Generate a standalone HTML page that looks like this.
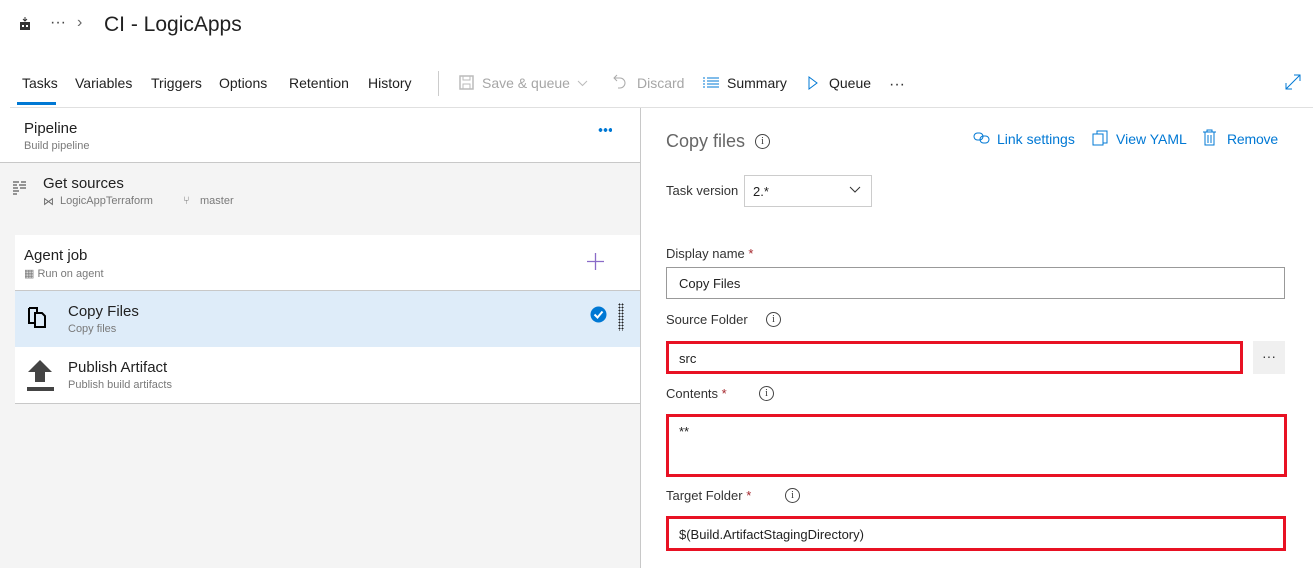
<!DOCTYPE html>
<html><head><meta charset="utf-8"><style>
*{box-sizing:border-box;margin:0;padding:0}
body{width:1313px;height:568px;overflow:hidden;background:#fff;font-family:"Liberation Sans",sans-serif;color:#212121;position:relative}
.a{position:absolute;white-space:nowrap}
.s{font-size:11px;color:#797979}
.lbl{font-size:13px;color:#333}
.req{color:#a4262c}
.info{display:inline-block;width:15px;height:15px;border:1px solid #444;border-radius:50%;font-size:10px;line-height:13px;text-align:center;font-family:"Liberation Serif",serif;color:#333}
.red{position:absolute;border:3px solid #e81123;background:#fff}
</style></head><body>
<!-- header -->
<svg class="a" style="left:19px;top:17px" width="12" height="14" viewBox="0 0 12 14"><path d="M6 0v4M4 2l2 2 2-2" stroke="#333" fill="none"/><rect x="1" y="5" width="10" height="8" fill="#333"/><rect x="3" y="8" width="2" height="2" fill="#fff"/><rect x="7" y="8" width="2" height="2" fill="#fff"/></svg>
<div class="a" style="left:50px;top:14px;font-size:16px;color:#444">···</div>
<div class="a" style="left:77px;top:14px;font-size:16px;color:#666">›</div>
<div class="a" style="left:104px;top:13px;font-size:21px;color:#212121">CI - LogicApps</div>
<!-- tabs -->
<div class="a" style="left:22px;top:75px;font-size:14px;color:#212121">Tasks</div>
<div class="a" style="left:17px;top:102px;width:39px;height:3px;background:#0078d4"></div>
<div class="a" style="left:75px;top:75px;font-size:14px">Variables</div>
<div class="a" style="left:151px;top:75px;font-size:14px">Triggers</div>
<div class="a" style="left:219px;top:75px;font-size:14px">Options</div>
<div class="a" style="left:289px;top:75px;font-size:14px">Retention</div>
<div class="a" style="left:368px;top:75px;font-size:14px">History</div>
<div class="a" style="left:438px;top:71px;width:1px;height:25px;background:#ccc"></div>
<svg class="a" style="left:459px;top:75px" width="15" height="15"><rect x="1" y="1" width="13" height="13" fill="none" stroke="#bbb" stroke-width="1.5"/><rect x="4" y="1" width="7" height="4" fill="none" stroke="#bbb"/><rect x="4" y="9" width="7" height="5" fill="none" stroke="#bbb"/></svg>
<div class="a" style="left:482px;top:75px;font-size:14px;color:#a6a6a6">Save &amp; queue</div>
<svg class="a" style="left:577px;top:80px" width="11" height="7"><path d="M1 1l4.5 4.5L10 1" fill="none" stroke="#bbb"/></svg>
<svg class="a" style="left:613px;top:74px" width="14" height="18"><path d="M4 1L1 4l3 3M1 4h6a5 5 0 0 1 0 10H5" fill="none" stroke="#aaa"/></svg>
<div class="a" style="left:637px;top:75px;font-size:14px;color:#a6a6a6">Discard</div>
<svg class="a" style="left:703px;top:77px" width="16" height="12"><path d="M0 1h2M4 1h12M0 4h2M4 4h12M0 7h2M4 7h12M0 10h2M4 10h12" stroke="#0078d4"/></svg>
<div class="a" style="left:727px;top:75px;font-size:14px">Summary</div>
<svg class="a" style="left:808px;top:76px" width="10" height="14"><path d="M1 1l8 6-8 6z" fill="none" stroke="#0078d4"/></svg>
<div class="a" style="left:829px;top:75px;font-size:14px">Queue</div>
<div class="a" style="left:889px;top:76px;font-size:16px;color:#333">···</div>
<svg class="a" style="left:1285px;top:74px" width="16" height="16"><path d="M1 15L15 1M9 1h6v6M1 9v6h6" fill="none" stroke="#0078d4"/></svg>
<div class="a" style="left:10px;top:107px;width:1303px;height:1px;background:#e0e0e0"></div>
<!-- left panel -->
<div class="a" style="left:0;top:162px;width:640px;height:406px;background:#f4f4f4;border-top:1px solid #c8c8c8"></div>
<div class="a" style="left:640px;top:108px;width:1px;height:460px;background:#c8c8c8"></div>
<div class="a" style="left:24px;top:120px;font-size:15px">Pipeline</div>
<div class="a s" style="left:24px;top:140px">Build pipeline</div>
<div class="a" style="left:598px;top:128px;width:14px;height:4px;background:radial-gradient(circle,#0078d4 55%,transparent 60%) 0 0/5px 4px"></div>
<svg class="a" style="left:13px;top:181px" width="14" height="14"><path d="M0 1h6M8 1h5M0 4h4M6 4h7M0 7h5M7 7h6M0 10h6M0 13h4" stroke="#333"/></svg>
<div class="a" style="left:43px;top:175px;font-size:15px">Get sources</div>
<div class="a s" style="left:43px;top:195px;color:#666">⋈</div>
<div class="a s" style="left:60px;top:195px">LogicAppTerraform</div>
<div class="a s" style="left:183px;top:195px">⑂</div>
<div class="a s" style="left:200px;top:195px">master</div>
<div class="a" style="left:15px;top:235px;width:625px;height:56px;background:#fff;border-bottom:1px solid #c8c8c8"></div>
<div class="a" style="left:24px;top:247px;font-size:15px">Agent job</div>
<div class="a s" style="left:24px;top:267px">▦ Run on agent</div>
<svg class="a" style="left:587px;top:253px" width="17" height="17"><path d="M8.5 0v17M0 8.5h17" stroke="#8a6bc8" stroke-width="1.3"/></svg>
<div class="a" style="left:15px;top:291px;width:625px;height:56px;background:#deecf9"></div>
<svg class="a" style="left:28px;top:307px" width="18" height="22"><path d="M1 1h8l0 4M1 1v15h5" fill="none" stroke="#000" stroke-width="2"/><path d="M7 6h7l3 3v11H7z" fill="none" stroke="#000" stroke-width="2"/></svg>
<div class="a" style="left:68px;top:303px;font-size:15px">Copy Files</div>
<div class="a s" style="left:68px;top:323px">Copy files</div>
<svg class="a" style="left:590px;top:306px" width="17" height="17"><circle cx="8.5" cy="8.5" r="8" fill="#0078d4"/><path d="M4.5 8.5l3 3 5-6" fill="none" stroke="#fff" stroke-width="2"/></svg>
<div class="a" style="left:618px;top:303px;width:6px;height:28px;background:radial-gradient(circle,#222 45%,transparent 50%) 0 0/3px 3px"></div>
<div class="a" style="left:15px;top:347px;width:625px;height:57px;background:#fff;border-bottom:1px solid #c8c8c8"></div>
<svg class="a" style="left:27px;top:360px" width="27" height="32"><path d="M13 0L1 12h7v10h10V12h7z" fill="#444"/><rect x="0" y="27" width="27" height="4" fill="#444"/></svg>
<div class="a" style="left:68px;top:359px;font-size:15px">Publish Artifact</div>
<div class="a s" style="left:68px;top:379px">Publish build artifacts</div>
<!-- right -->
<div class="a" style="left:666px;top:131px;font-size:18px;color:#666">Copy files</div>
<div class="a info" style="left:755px;top:134px">i</div>
<svg class="a" style="left:973px;top:132px" width="18" height="12"><rect x="1" y="1" width="9" height="7" rx="3.5" fill="none" stroke="#0078d4"/><rect x="7" y="4" width="9" height="7" rx="3.5" fill="none" stroke="#0078d4"/></svg>
<div class="a" style="left:997px;top:131px;font-size:14px;color:#0078d4">Link settings</div>
<svg class="a" style="left:1092px;top:130px" width="16" height="16"><rect x="1" y="4" width="10" height="11" fill="none" stroke="#0078d4"/><path d="M5 4V1h10v12h-4" fill="none" stroke="#0078d4"/></svg>
<div class="a" style="left:1116px;top:131px;font-size:14px;color:#0078d4">View YAML</div>
<svg class="a" style="left:1203px;top:129px" width="13" height="17"><path d="M0 3h13M4 3V1h5v2M2 3v13h9V3M5 6v8M8 6v8" fill="none" stroke="#0078d4"/></svg>
<div class="a" style="left:1227px;top:131px;font-size:14px;color:#0078d4;letter-spacing:-0.2px">Remove</div>
<div class="a lbl" style="left:666px;top:183px">Task version</div>
<div class="a" style="left:744px;top:175px;width:128px;height:32px;border:1px solid #ccc;font-size:13px;padding:8px 8px">2.*</div>
<svg class="a" style="left:849px;top:186px" width="12" height="8"><path d="M1 1l5 5 5-5" fill="none" stroke="#333"/></svg>
<div class="a lbl" style="left:666px;top:246px">Display name <span class="req">*</span></div>
<div class="a" style="left:666px;top:267px;width:619px;height:32px;border:1px solid #999;font-size:13px;padding:8px 12px">Copy Files</div>
<div class="a lbl" style="left:666px;top:312px">Source Folder</div>
<div class="a info" style="left:766px;top:312px">i</div>
<div class="red" style="left:666px;top:341px;width:577px;height:33px;font-size:13px;padding:7px 10px">src</div>
<div class="a" style="left:1253px;top:341px;width:32px;height:33px;background:#f0f0f0;text-align:center;font-size:14px;line-height:30px;color:#333">···</div>
<div class="a lbl" style="left:666px;top:386px">Contents <span class="req">*</span></div>
<div class="a info" style="left:759px;top:386px">i</div>
<div class="red" style="left:666px;top:414px;width:621px;height:63px;font-size:13px;padding:7px 10px">**</div>
<div class="a lbl" style="left:666px;top:488px">Target Folder <span class="req">*</span></div>
<div class="a info" style="left:785px;top:488px">i</div>
<div class="red" style="left:666px;top:516px;width:620px;height:35px;font-size:13px;padding:8px 10px">$(Build.ArtifactStagingDirectory)</div>
</body></html>
